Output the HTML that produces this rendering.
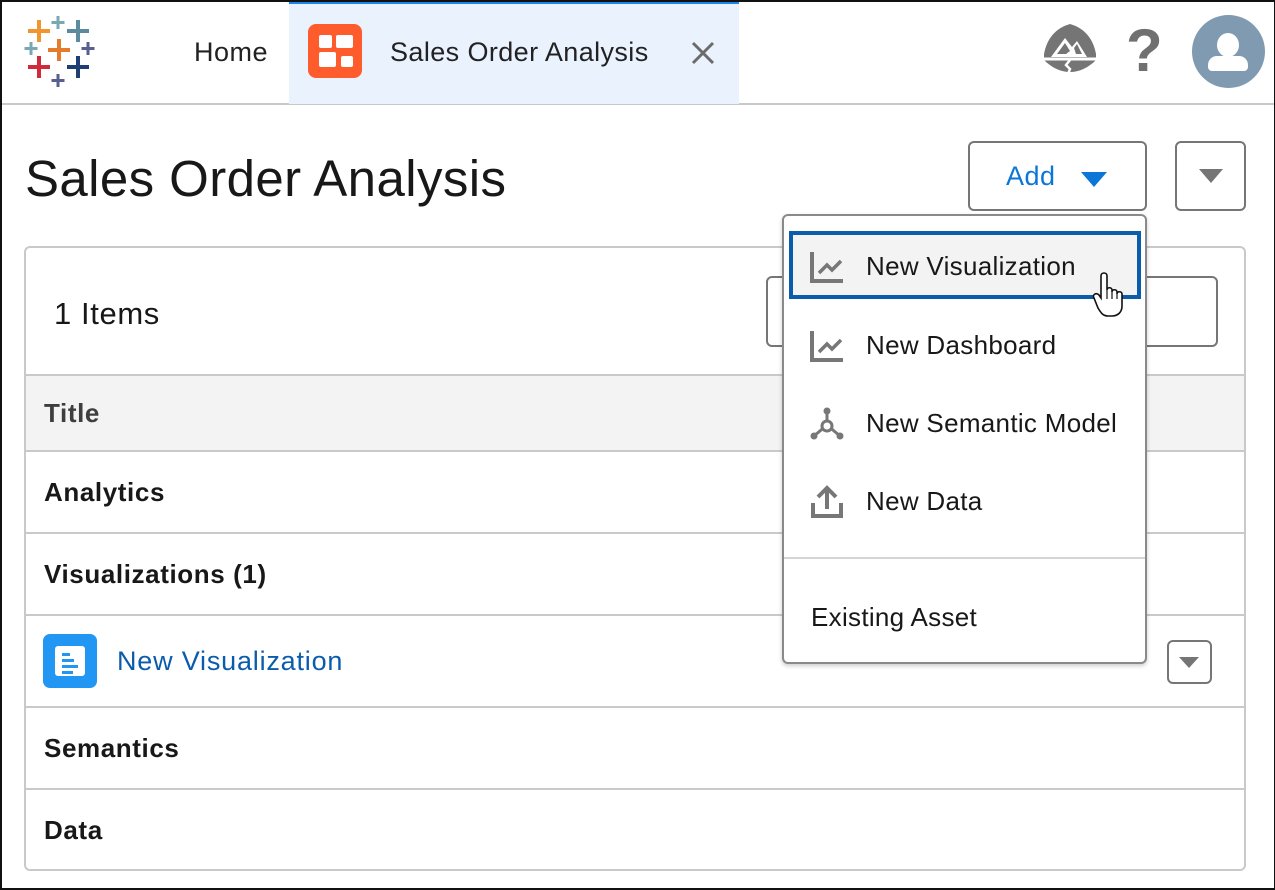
<!DOCTYPE html>
<html><head><style>
*{box-sizing:border-box;margin:0;padding:0}
body{width:1275px;height:890px;overflow:hidden;background:#fff;font-family:"Liberation Sans",sans-serif;position:relative;color:#181818}
.frame{position:absolute;left:0;top:0;width:1275px;height:890px;border:2px solid #111;border-right-width:1px;border-bottom-width:2px;pointer-events:none;z-index:50}
.abs{position:absolute}
.hdr{position:absolute;left:0;top:0;width:1275px;height:105px;border-bottom:2px solid #c9c9c9}
.tab{position:absolute;left:289px;top:0;width:450px;height:104px;background:#eaf3fd;border-top:4px solid #1b86e8}
.card{position:absolute;left:24px;top:246px;width:1222px;height:625px;border:2px solid #c9c9c9;border-radius:6px}
.row{position:absolute;left:0;width:1218px;border-top:2px solid #c9c9c9;font-size:26px;font-weight:bold;letter-spacing:0.6px;padding-left:18px;display:flex;align-items:center}
.menu{position:absolute;left:782px;top:214px;width:365px;height:450px;background:#fff;border:2px solid #8a8a8a;border-radius:6px;box-shadow:0 2px 4px rgba(0,0,0,.2);z-index:10}
.mi{position:absolute;left:0;width:361px;height:66px;font-size:26px;letter-spacing:0.3px;display:flex;align-items:center;padding-left:82px;color:#181818}
.mi svg{position:absolute;left:26px;top:17px}
</style></head><body>
<div class="hdr">
<svg class="abs" style="left:22px;top:14px" width="76" height="74" viewBox="0 0 76 74">
<g stroke-linecap="butt">
<path d="M17 6v22M6 17h22" stroke="#f0962f" stroke-width="4"/>
<path d="M36 2v13M29.5 8.5h13" stroke="#7ba7b5" stroke-width="3"/>
<path d="M56 6v22M45 17h22" stroke="#5a8b9e" stroke-width="4"/>
<path d="M9 28v13M2.5 34.5h13" stroke="#7ba7b5" stroke-width="3"/>
<path d="M37 25v22M26 36h22" stroke="#e57b2d" stroke-width="4"/>
<path d="M66 28v13M59.5 34.5h13" stroke="#5a5f92" stroke-width="3"/>
<path d="M17 42v22M6 53h22" stroke="#d02b3a" stroke-width="4"/>
<path d="M56 42v22M45 53h22" stroke="#1e3e74" stroke-width="4"/>
<path d="M36 60v13M29.5 66.5h13" stroke="#5a5f92" stroke-width="3"/>
</g></svg>
<div class="abs" style="left:194px;top:37px;font-size:27px;letter-spacing:0.5px;color:#222">Home</div>
<div class="tab"></div>
<div class="abs" style="left:308px;top:24px;width:54px;height:54px;background:#fe5c2c;border-radius:8px"></div>
<div class="abs" style="left:319px;top:35px;width:13px;height:13px;background:#fff;border-radius:2px"></div>
<div class="abs" style="left:336px;top:35px;width:17px;height:13px;background:#fff;border-radius:2px"></div>
<div class="abs" style="left:319px;top:52px;width:17px;height:15px;background:#fff;border-radius:2px"></div>
<div class="abs" style="left:341px;top:56px;width:12px;height:11px;background:#fff;border-radius:2px"></div>
<div class="abs" style="left:390px;top:37px;font-size:27px;letter-spacing:0.4px;color:#222">Sales Order Analysis</div>
<svg class="abs" style="left:691px;top:41px" width="24" height="24"><path d="M2 2L22 22M22 2L2 22" stroke="#6b6b6b" stroke-width="3"/></svg>
<svg class="abs" style="left:1043px;top:24px" width="54" height="50" viewBox="0 0 54 50"><path d="M27 0C13 4 4 14 1 30v6c8 8 17 12 26 12s18-4 26-12v-6C50 14 41 4 27 0z" fill="#757575"/><path d="M8 33L22 14l7 9 5-6 10 16z" fill="#fff"/><path d="M14 30L22 19l5 8-4 3zM31 24l3-4 5 10h-6z" fill="#757575"/><path d="M1 35h52" stroke="#fff" stroke-width="3"/><path d="M27 36l-4 5 4 4-2 5" stroke="#fff" stroke-width="2.5" fill="none"/></svg>
<div class="abs" style="left:1126px;top:16px;font-size:60px;font-weight:bold;color:#707070">?</div>
<div class="abs" style="left:1192px;top:15px;width:73px;height:73px;background:#7f9ab1;border-radius:50%"></div>
<div class="abs" style="left:1217px;top:33px;width:22px;height:24px;background:#fff;border-radius:50%"></div>
<div class="abs" style="left:1208px;top:56px;width:40px;height:15px;background:#fff;border-radius:9px 9px 4px 4px"></div>
</div>
<div class="abs" style="left:25px;top:149px;font-size:51px;letter-spacing:0.4px;color:#181818">Sales Order Analysis</div>
<div class="abs" style="left:968px;top:141px;width:179px;height:70px;border:2px solid #767676;border-radius:6px"></div>
<div class="abs" style="left:1006px;top:161px;font-size:27px;letter-spacing:0.5px;color:#0b76d8">Add</div>
<svg class="abs" style="left:1081px;top:172px" width="26" height="16"><path d="M0 0h26L13 15z" fill="#0b76d8"/></svg>
<div class="abs" style="left:1175px;top:141px;width:71px;height:70px;border:2px solid #767676;border-radius:6px"></div>
<svg class="abs" style="left:1199px;top:169px" width="24" height="15"><path d="M0 0h24L12 14z" fill="#757575"/></svg>
<div class="card">
<div class="abs" style="left:28px;top:48px;font-size:31px;letter-spacing:0.6px">1 Items</div>
<div class="abs" style="left:740px;top:28px;width:452px;height:71px;border:2px solid #767676;border-radius:6px"></div>
<div class="row" style="top:126px;height:76px;background:#f3f3f3;color:#3e3e3e">Title</div>
<div class="row" style="top:202px;height:82px">Analytics</div>
<div class="row" style="top:284px;height:82px">Visualizations (1)</div>
<div class="row" style="top:366px;height:92px;font-weight:normal;color:#0b5cab;font-size:27px;letter-spacing:0.8px;padding-left:91px">New Visualization
<div class="abs" style="left:17px;top:18px;width:54px;height:54px;background:#2196f3;border-radius:7px"></div>
<div class="abs" style="left:29px;top:30px;width:30px;height:30px;background:#fff;border-radius:3px"></div>
<div class="abs" style="left:36px;top:37px;width:8px;height:3px;background:#2196f3"></div>
<div class="abs" style="left:36px;top:43px;width:12px;height:3px;background:#2196f3"></div>
<div class="abs" style="left:36px;top:49px;width:16px;height:3px;background:#2196f3"></div>
<div class="abs" style="left:36px;top:55px;width:11px;height:3px;background:#2196f3"></div>
<div class="abs" style="left:1141px;top:24px;width:45px;height:44px;border:2px solid #767676;border-radius:6px"></div>
<svg class="abs" style="left:1153px;top:41px" width="20" height="12"><path d="M0 0h20L10 11z" fill="#757575"/></svg>
</div>
<div class="row" style="top:458px;height:82px">Semantics</div>
<div class="row" style="top:540px;height:83px">Data</div>
</div>
<div class="menu">
<div class="abs" style="left:5px;top:15px;width:352px;height:68px;background:#f3f3f3;border:4px solid #0b5cab"></div>
<div class="mi" style="top:17px">New Visualization<svg width="34" height="34" viewBox="0 0 34 34"><path d="M2 2v29h31" stroke="#777" stroke-width="4" fill="none"/><path d="M9 23l8-8 5 5 9-9" stroke="#777" stroke-width="3.5" fill="none"/></svg></div>
<div class="mi" style="top:96px">New Dashboard<svg width="34" height="34" viewBox="0 0 34 34"><path d="M2 2v29h31" stroke="#777" stroke-width="4" fill="none"/><path d="M9 23l8-8 5 5 9-9" stroke="#777" stroke-width="3.5" fill="none"/></svg></div>
<div class="mi" style="top:174px">New Semantic Model<svg width="34" height="34" viewBox="0 0 34 34"><circle cx="17" cy="4" r="3.5" fill="#777"/><circle cx="4" cy="29" r="3.5" fill="#777"/><circle cx="30" cy="29" r="3.5" fill="#777"/><path d="M17 4v14M17 18L4 29M17 18l13 11" stroke="#777" stroke-width="3"/><circle cx="17" cy="19" r="5" fill="#fff" stroke="#777" stroke-width="3"/></svg></div>
<div class="mi" style="top:252px">New Data<svg width="34" height="34" viewBox="0 0 34 34"><path d="M3 18v13h28V18" stroke="#777" stroke-width="4" fill="none"/><path d="M17 24V4M8 12l9-9 9 9" stroke="#777" stroke-width="4" fill="none"/></svg></div>
<div class="abs" style="left:0;top:341px;width:361px;height:2px;background:#d5d5d5"></div>
<div class="mi" style="top:368px;padding-left:27px">Existing Asset</div>
</div>
<svg class="abs" style="left:1092px;top:270px;z-index:20" width="36" height="50" viewBox="0 0 36 50"><path d="M9 6c0-4 6-4 6 0v14c0-3 5-3 5 0v2c0-3 5-3 5 0v2c0-3 5-3 5 0v12c0 6-4 10-10 10h-4c-5 0-7-3-10-8L2 28c-2-3 2-6 5-3l2 3z" fill="#fff" stroke="#111" stroke-width="1.6"/><path d="M15 20v9M20 22v7M25 24v5" stroke="#111" stroke-width="1.2"/></svg>
<div class="frame"></div>
</body></html>
